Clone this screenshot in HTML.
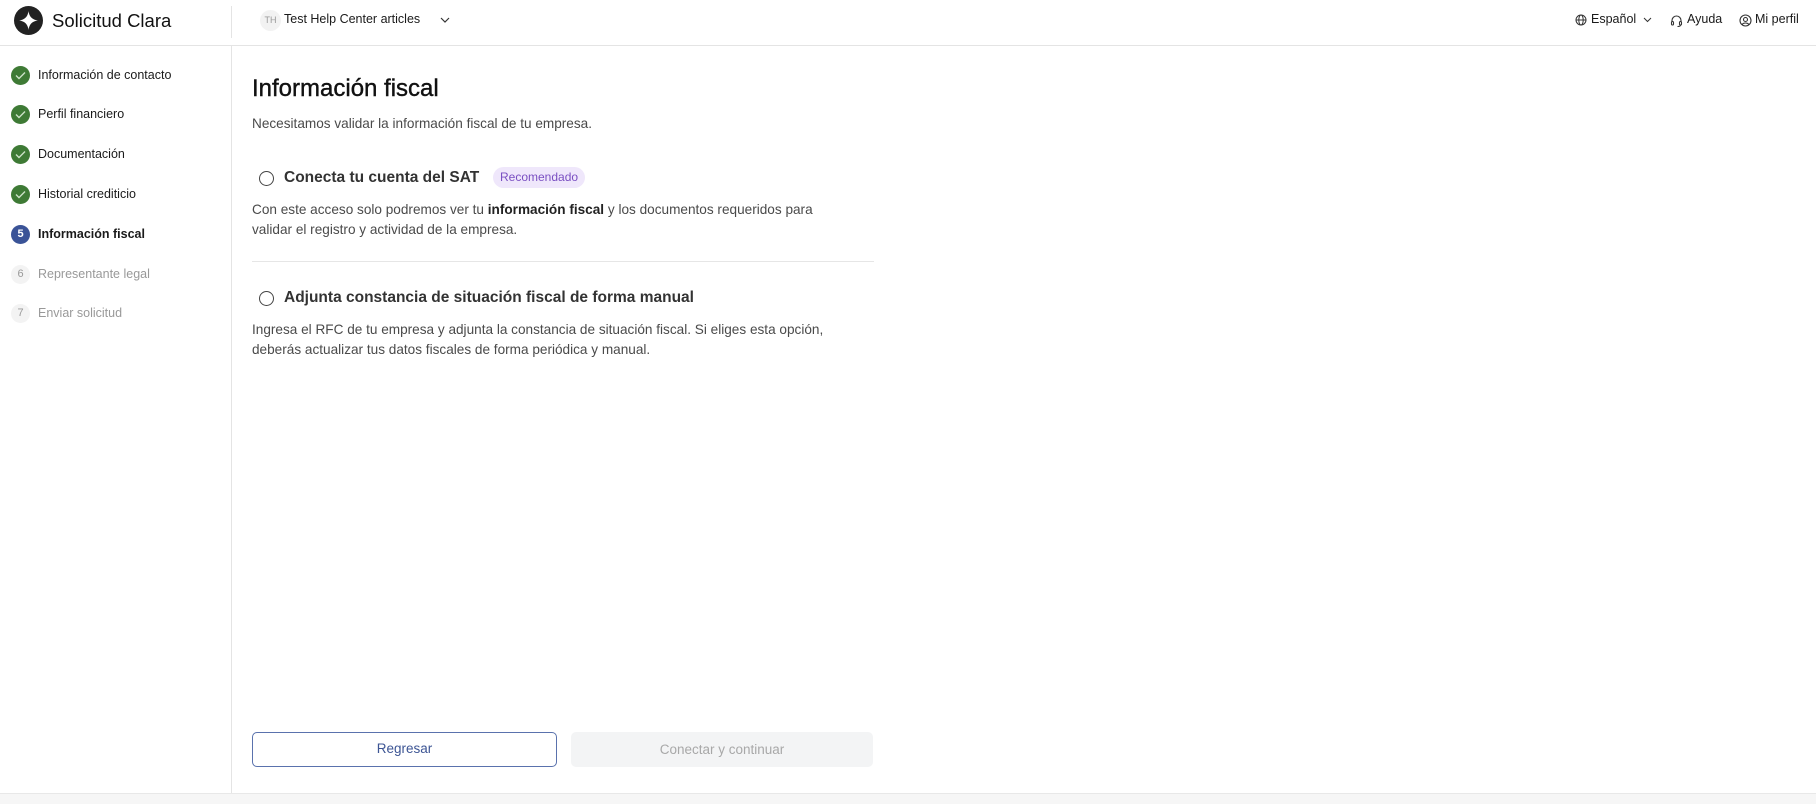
<!DOCTYPE html>
<html><head><meta charset="utf-8"><style>
*{margin:0;padding:0;box-sizing:border-box}
body{width:1816px;height:804px;background:#fff;font-family:"Liberation Sans",sans-serif;color:#1a1a1a;position:relative;overflow:hidden}
.a{position:absolute;white-space:nowrap}
.step{position:absolute;left:11px;height:20px;display:flex;align-items:center;font-size:12.5px}
.step .c{width:19px;height:19px;border-radius:50%;display:flex;align-items:center;justify-content:center;margin-right:8px;font-size:11px}
.ok{background:#3e7a35}
.p{font-size:13.6px;color:#4a4a4a;line-height:20px}
.radio{width:15px;height:15px;border:1.6px solid #444;border-radius:50%}
</style></head><body>
<div class="a" style="left:0;top:45px;width:1816px;height:1px;background:#e4e4e4"></div>
<div class="a" style="left:231px;top:6px;width:1px;height:32px;background:#e4e4e4"></div>
<div class="a" style="left:231px;top:46px;width:1px;height:748px;background:#e4e4e4"></div>
<div class="a" style="left:0;top:793px;width:1816px;height:11px;background:#f6f6f6;border-top:1px solid #e8e8e8"></div>
<svg class="a" style="left:14px;top:6px" width="29" height="29" viewBox="0 0 28 28"><circle cx="14" cy="14" r="14" fill="#222"/><path d="M14 5 Q15 13 23 14 Q15 15 14 23 Q13 15 5 14 Q13 13 14 5Z" fill="#fff"/></svg>
<div class="a" style="left:52px;top:10px;font-size:18.5px;color:#111">Solicitud Clara</div>
<div class="a" style="left:260px;top:10px;width:21px;height:21px;border-radius:50%;background:#f2f2f2;font-size:9px;color:#999;text-align:center;line-height:21px">TH</div>
<div class="a" style="left:284px;top:12px;font-size:12.5px">Test Help Center articles</div>
<svg class="a" style="left:440px;top:16px" width="10" height="8"><path d="M1 2l4 4 4-4" stroke="#333" fill="none" stroke-width="1.2"/></svg>
<svg class="a" style="left:1575px;top:14px" width="12" height="12" viewBox="0 0 12 12" fill="none" stroke="#333" stroke-width="1"><circle cx="6" cy="6" r="5"/><ellipse cx="6" cy="6" rx="2.2" ry="5"/><path d="M1 6h10"/></svg>
<div class="a" style="left:1591px;top:12px;font-size:12.5px">Español</div>
<svg class="a" style="left:1643px;top:17px" width="9" height="6"><path d="M1 1l3.5 3.5L8 1" stroke="#333" fill="none"/></svg>
<svg class="a" style="left:1670px;top:14px" width="13" height="13" viewBox="0 0 13 13" fill="none" stroke="#333" stroke-width="1.1"><path d="M2 8V6.5a4.5 4.5 0 019 0V8"/><rect x="1.5" y="7.5" width="2" height="3.5" rx="1"/><rect x="9.5" y="7.5" width="2" height="3.5" rx="1"/><path d="M10.5 11c0 1-1 1.5-3 1.5"/></svg>
<div class="a" style="left:1687px;top:12px;font-size:12.5px">Ayuda</div>
<svg class="a" style="left:1739px;top:14px" width="13" height="13" viewBox="0 0 13 13" fill="none" stroke="#333" stroke-width="1.1"><circle cx="6.5" cy="6.5" r="5.5"/><circle cx="6.5" cy="5.5" r="2"/><path d="M3 10.5c1.5-2 5.5-2 7 0"/></svg>
<div class="a" style="left:1755px;top:12px;font-size:12.5px">Mi perfil</div>

<div class="step" style="top:65px"><div class="c ok"><svg width="11" height="9"><path d="M1 4.5l3 3 6-6" stroke="#cde3c8" stroke-width="1.4" fill="none"/></svg></div>Información de contacto</div>
<div class="step" style="top:104px"><div class="c ok"><svg width="11" height="9"><path d="M1 4.5l3 3 6-6" stroke="#cde3c8" stroke-width="1.4" fill="none"/></svg></div>Perfil financiero</div>
<div class="step" style="top:144px"><div class="c ok"><svg width="11" height="9"><path d="M1 4.5l3 3 6-6" stroke="#cde3c8" stroke-width="1.4" fill="none"/></svg></div>Documentación</div>
<div class="step" style="top:184px"><div class="c ok"><svg width="11" height="9"><path d="M1 4.5l3 3 6-6" stroke="#cde3c8" stroke-width="1.4" fill="none"/></svg></div>Historial crediticio</div>
<div class="step" style="top:224px;font-weight:bold"><div class="c" style="background:#3a5397;color:#fff">5</div>Información fiscal</div>
<div class="step" style="top:264px;color:#999"><div class="c" style="background:#f3f3f3;color:#999">6</div>Representante legal</div>
<div class="step" style="top:303px;color:#999"><div class="c" style="background:#f3f3f3;color:#999">7</div>Enviar solicitud</div>

<div class="a" style="left:252px;top:75px;font-size:24px;color:#111;-webkit-text-stroke:0.4px #111">Información fiscal</div>
<div class="a p" style="left:252px;top:114px">Necesitamos validar la información fiscal de tu empresa.</div>
<div class="a radio" style="left:259px;top:171px"></div>
<div class="a" style="left:284px;top:169px;font-size:15.5px;font-weight:bold;color:#333">Conecta tu cuenta del SAT</div>
<div class="a" style="left:493px;top:167px;height:21px;padding:0 7px;border-radius:11px;background:#efe7fb;color:#7a4fc2;font-size:12px;line-height:21px">Recomendado</div>
<div class="a p" style="left:252px;top:200px">Con este acceso solo podremos ver tu <b style="color:#222">información fiscal</b> y los documentos requeridos para<br>validar el registro y actividad de la empresa.</div>
<div class="a" style="left:252px;top:261px;width:622px;height:1px;background:#e6e6e6"></div>
<div class="a radio" style="left:259px;top:291px"></div>
<div class="a" style="left:284px;top:289px;font-size:15.5px;font-weight:bold;color:#333">Adjunta constancia de situación fiscal de forma manual</div>
<div class="a p" style="left:252px;top:320px">Ingresa el RFC de tu empresa y adjunta la constancia de situación fiscal. Si eliges esta opción,<br>deberás actualizar tus datos fiscales de forma periódica y manual.</div>

<div class="a" style="left:252px;top:732px;width:305px;height:35px;border:1.5px solid #5a72ad;border-radius:5px;color:#3d5594;font-size:13.5px;text-align:center;line-height:32px">Regresar</div>
<div class="a" style="left:571px;top:732px;width:302px;height:35px;background:#f3f4f5;border-radius:5px;color:#a8a8a8;font-size:13.5px;text-align:center;line-height:35px">Conectar y continuar</div>
</body></html>
